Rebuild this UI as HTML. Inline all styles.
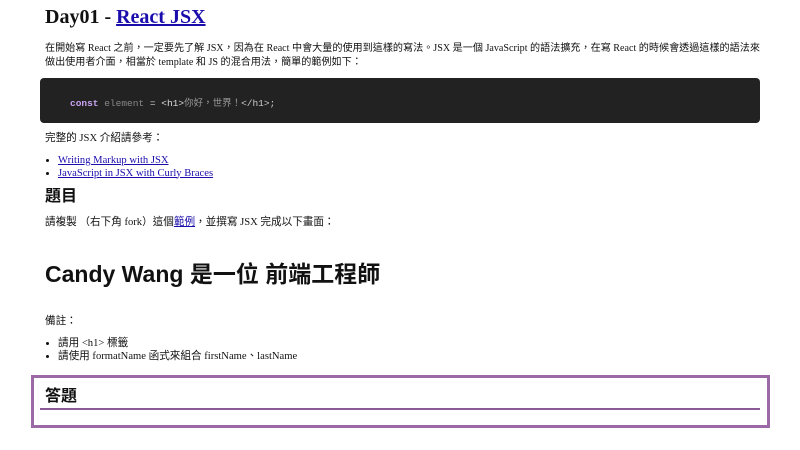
<!DOCTYPE html>
<html><head><meta charset="utf-8"><style>
body{margin:0;width:800px;height:450px;background:#fff;font-family:"Liberation Serif","Noto Sans CJK TC",serif;color:#111;position:relative;overflow:hidden}
.a{position:absolute;left:45px;white-space:nowrap}
p{font-size:10.6px;margin:0;line-height:14px}
a{color:#1a0dab}
h1{font-size:20px;margin:0;font-weight:bold}
ul{margin:0;padding-left:13px;font-size:10.6px;line-height:12.5px}
.sans{font-family:"Liberation Sans","Noto Sans CJK TC",sans-serif}
</style></head><body>
<h1 class="a" style="top:6px">Day01 - <a href="#">React JSX</a></h1>
<p class="a" style="top:42px;font-size:10.1px">在開始寫 React 之前，一定要先了解 JSX，因為在 React 中會大量的使用到這樣的寫法。JSX 是一個 JavaScript 的語法擴充，在寫 React 的時候會透過這樣的語法來<br>做出使用者介面，相當於 template 和 JS 的混合用法，簡單的範例如下：</p>
<div style="position:absolute;left:40px;top:78px;width:720px;height:45px;background:#222;border-radius:4px"></div>
<div class="a" style="left:70px;top:95px;font-family:'Liberation Mono','Noto Sans CJK TC',monospace;font-size:9.5px;color:#ccc"><span style="color:#c9a3f0;font-weight:bold">const</span> <span style="color:#888">element</span> = <span style="color:#ddd">&lt;h1&gt;</span><span style="color:#999">你好，世界！</span>&lt;/h1&gt;;</div>
<p class="a" style="top:132px">完整的 JSX 介紹請參考：</p>
<ul class="a" style="top:155px;left:45px"><li><a href="#">Writing Markup with JSX</a></li><li><a href="#">JavaScript in JSX with Curly Braces</a></li></ul>
<div class="a sans" style="top:182px;font-size:16px;font-weight:bold">題目</div>
<p class="a" style="top:216px">請複製 （右下角 fork）這個<a href="#">範例</a>，並撰寫 JSX 完成以下畫面：</p>
<div class="a sans" style="top:255px;font-size:23px;font-weight:bold">Candy Wang 是一位 前端工程師</div>
<p class="a" style="top:315px">備註：</p>
<ul class="a" style="top:338px"><li>請用 &lt;h1&gt; 標籤</li><li>請使用 formatName 函式來組合 firstName、lastName</li></ul>
<div style="position:absolute;left:31px;top:375px;width:733px;height:47px;border:3px solid #9b6aa6"></div>
<div class="a sans" style="top:382px;font-size:16px;font-weight:bold">答題</div>
<div style="position:absolute;left:40px;top:408px;width:720px;height:2px;background:#8d5a98"></div>
</body></html>
